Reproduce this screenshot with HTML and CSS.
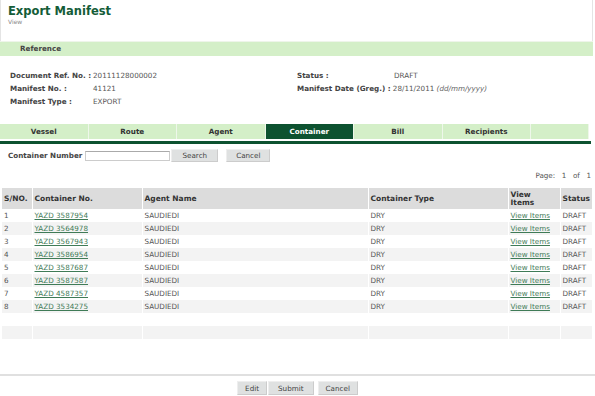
FILE: index.html
```html
<!DOCTYPE html>
<html lang="en">
<head>
  <meta charset="UTF-8">
  <title>Export Manifest</title>
  <link rel="stylesheet" href="styles.css">
</head>
<body>
  <div class="page">
    <div class="page-head">
      <h1>Export Manifest</h1>
      <div class="sub">View</div>
    </div>

    <div class="section-bar">Reference</div>

    <div class="info">
      <div class="info-col">
        <div class="info-row"><span class="lbl lbl-left">Document Ref. No. :</span><span>20111128000002</span></div>
        <div class="info-row"><span class="lbl lbl-left">Manifest No. :</span><span>41121</span></div>
        <div class="info-row"><span class="lbl lbl-left">Manifest Type :</span><span>EXPORT</span></div>
      </div>
      <div class="info-col right">
        <div class="info-row"><span class="lbl lbl-status">Status :</span><span>DRAFT</span></div>
        <div class="info-row"><span class="lbl">Manifest Date (Greg.) :</span><span>&nbsp;28/11/2011 <i>(dd/mm/yyyy)</i></span></div>
      </div>
    </div>

    <div class="tabs">
      <div class="tab">Vessel</div>
      <div class="tab">Route</div>
      <div class="tab">Agent</div>
      <div class="tab active">Container</div>
      <div class="tab">Bill</div>
      <div class="tab">Recipients</div>
      <div class="tab"></div>
    </div>

    <div class="search">
      <span class="lbl">Container Number</span>
      <input type="text" class="search-input">
      <button class="btn btn-search">Search</button>
      <button class="btn btn-cancel">Cancel</button>
    </div>

    <div class="pager">Page:&nbsp; 1&nbsp; of&nbsp; 1</div>

    <table class="grid">
      <thead>
        <tr>
          <th class="c-sno">S/NO.</th>
          <th class="c-no">Container No.</th>
          <th class="c-agent">Agent Name</th>
          <th class="c-type">Container Type</th>
          <th class="c-view">View<br>Items</th>
          <th class="c-status">Status</th>
        </tr>
      </thead>
      <tbody>
        <tr><td>1</td><td><a href="#">YAZD 3587954</a></td><td>SAUDIEDI</td><td>DRY</td><td><a href="#">View Items</a></td><td>DRAFT</td></tr>
        <tr><td>2</td><td><a href="#">YAZD 3564978</a></td><td>SAUDIEDI</td><td>DRY</td><td><a href="#">View Items</a></td><td>DRAFT</td></tr>
        <tr><td>3</td><td><a href="#">YAZD 3567943</a></td><td>SAUDIEDI</td><td>DRY</td><td><a href="#">View Items</a></td><td>DRAFT</td></tr>
        <tr><td>4</td><td><a href="#">YAZD 3586954</a></td><td>SAUDIEDI</td><td>DRY</td><td><a href="#">View Items</a></td><td>DRAFT</td></tr>
        <tr><td>5</td><td><a href="#">YAZD 3587687</a></td><td>SAUDIEDI</td><td>DRY</td><td><a href="#">View Items</a></td><td>DRAFT</td></tr>
        <tr><td>6</td><td><a href="#">YAZD 3587587</a></td><td>SAUDIEDI</td><td>DRY</td><td><a href="#">View Items</a></td><td>DRAFT</td></tr>
        <tr><td>7</td><td><a href="#">YAZD 4587357</a></td><td>SAUDIEDI</td><td>DRY</td><td><a href="#">View Items</a></td><td>DRAFT</td></tr>
        <tr><td>8</td><td><a href="#">YAZD 3534275</a></td><td>SAUDIEDI</td><td>DRY</td><td><a href="#">View Items</a></td><td>DRAFT</td></tr>
        <tr class="empty"><td></td><td></td><td></td><td></td><td></td><td></td></tr>
        <tr class="empty"><td></td><td></td><td></td><td></td><td></td><td></td></tr>
      </tbody>
    </table>

    <div class="actions">
      <button class="btn">Edit</button>
      <button class="btn">Submit</button>
      <button class="btn">Cancel</button>
    </div>
  </div>
</body>
</html>
```

FILE: styles.css
```css
* {
  margin: 0;
  padding: 0;
  box-sizing: border-box;
}

body {
  width: 595px;
  height: 396px;
  overflow: hidden;
  background-color: #fff;
  color: #555;
  font-family: 'DejaVu Sans', Verdana, sans-serif;
  font-size: 7.2px;
}

.page {
  width: 595px;
  height: 396px;
  display: flex;
  flex-direction: column;
}

.page-head {
  height: 41px;
  padding: 5px 7px 0;
  border-left: 1px solid #e4e4e4;
  border-right: 1px solid #e4e4e4;
  margin-right: 2px;
}

.page-head h1 {
  font-size: 11.5px;
  font-weight: bold;
  color: #145c38;
  line-height: 13px;
}

.sub {
  font-size: 6px;
  color: #888;
  line-height: 8px;
}

.section-bar {
  height: 15px;
  margin-right: 2px;
  padding-left: 20px;
  border-top: 1px solid #eef5ea;
  background-color: #d4efc8;
  color: #444;
  font-weight: bold;
  line-height: 14px;
}

.info {
  display: flex;
  height: 68px;
  padding: 13px 0 0 10px;
}

.info-col {
  width: 287px;
}

.info-col.right {
  width: auto;
}

.info-row {
  display: flex;
  height: 13px;
  line-height: 13px;
}

.info-row i {
  color: #666;
}

.lbl {
  font-weight: bold;
  color: #444;
  white-space: nowrap;
}

.lbl-left {
  width: 83px;
}

.lbl-status {
  width: 97px;
}

.tabs {
  display: grid;
  grid-template-columns: repeat(6, 88.5px) 58px;
  margin-right: 4px;
  border-bottom: 3px solid #0d5230;
  padding-bottom: 2px;
  height: 20px;
}

.tab {
  height: 15px;
  background-color: #d4efc8;
  border-right: 1px solid #eef7ea;
  color: #333;
  font-weight: bold;
  text-align: center;
  line-height: 15px;
}

.tab.active {
  background-color: #0d5230;
  color: #fff;
}

.search {
  display: flex;
  align-items: center;
  height: 17px;
  margin-top: 3px;
  padding-left: 8px;
}

.search .lbl {
  margin-right: 3px;
}

.search-input {
  width: 85px;
  height: 10px;
  border: 1px solid #ccc;
  border-top-color: #aaa;
  margin-right: 1px;
}

.btn {
  height: 13px;
  padding: 0 8px;
  border: 1px solid #eee;
  border-right-color: #ccc;
  border-bottom-color: #ccc;
  background-color: #dfe1e1;
  color: #444;
  font-family: 'DejaVu Sans', Verdana, sans-serif;
  font-size: 7.2px;
}

.btn-search {
  width: 47px;
}

.btn-cancel {
  width: 44px;
  margin-left: 8px;
}

.pager {
  height: 24px;
  padding: 5px 4px 0 0;
  text-align: right;
  line-height: 14px;
  color: #555;
  word-spacing: 1px;
}

.grid {
  width: 590px;
  margin-left: 2px;
  border-collapse: collapse;
  table-layout: fixed;
}

.grid th {
  height: 21px;
  background-color: #dcdcdc;
  border-right: 1px solid #fff;
  color: #333;
  font-weight: bold;
  font-size: 7.5px;
  text-align: left;
  line-height: 8px;
  padding: 0 2px;
}

.grid th:last-child {
  border-right: none;
}

.c-sno { width: 30px; }
.c-no { width: 110px; }
.c-agent { width: 226px; }
.c-type { width: 140px; }
.c-view { width: 52px; }
.c-status { width: 32px; }

.grid td {
  height: 13px;
  padding: 0 2px;
  border-right: 1px solid #fff;
  line-height: 12px;
  white-space: nowrap;
  overflow: hidden;
}

.grid tbody tr:nth-child(even) td {
  background-color: #f3f3f3;
}

.grid a {
  color: #3f7b57;
}

.actions {
  display: flex;
  justify-content: center;
  gap: 1px;
  margin-top: auto;
  height: 22px;
  padding-top: 5px;
  border-top: 2px solid #e0e0e0;
}

.actions .btn {
  height: 14px;
  padding: 0 7px;
}

.actions .btn:nth-child(2) {
  padding: 0 9px;
}

.actions .btn:last-child {
  margin-left: 3px;
}
```
